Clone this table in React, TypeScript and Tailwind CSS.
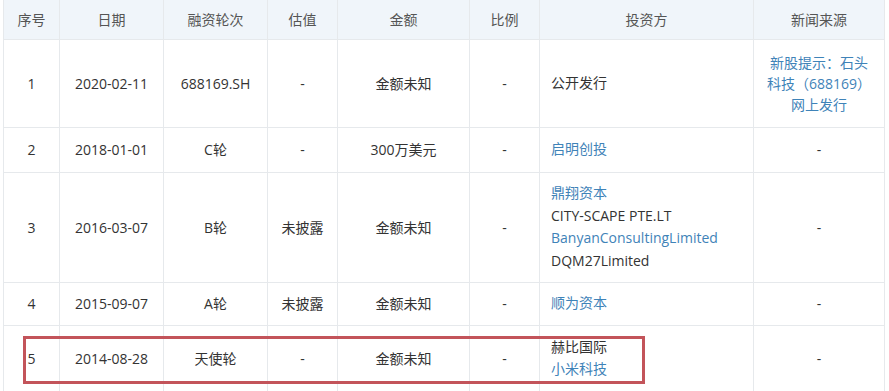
const cols = [56, 104, 104, 70, 132, 70, 214, 131];
const headers = ["序号", "日期", "融资轮次", "估值", "金额", "比例", "投资方", "新闻来源"];

type Investor = { name: string; link?: boolean };

type Row = {
  no: string;
  date: string;
  round: string;
  value: string;
  amount: string;
  ratio: string;
  investors: Investor[];
  news: string[];
  height: string;
};

const rows: Row[] = [
  {
    no: "1",
    date: "2020-02-11",
    round: "688169.SH",
    value: "-",
    amount: "金额未知",
    ratio: "-",
    investors: [{ name: "公开发行" }],
    news: ["新股提示：石头", "科技（688169）", "网上发行"],
    height: "h-[88px]",
  },
  {
    no: "2",
    date: "2018-01-01",
    round: "C轮",
    value: "-",
    amount: "300万美元",
    ratio: "-",
    investors: [{ name: "启明创投", link: true }],
    news: [],
    height: "h-[45px]",
  },
  {
    no: "3",
    date: "2016-03-07",
    round: "B轮",
    value: "未披露",
    amount: "金额未知",
    ratio: "-",
    investors: [
      { name: "鼎翔资本", link: true },
      { name: "CITY-SCAPE PTE.LT" },
      { name: "BanyanConsultingLimited", link: true },
      { name: "DQM27Limited" },
    ],
    news: [],
    height: "h-[110px]",
  },
  {
    no: "4",
    date: "2015-09-07",
    round: "A轮",
    value: "未披露",
    amount: "金额未知",
    ratio: "-",
    investors: [{ name: "顺为资本", link: true }],
    news: [],
    height: "h-[43px]",
  },
  {
    no: "5",
    date: "2014-08-28",
    round: "天使轮",
    value: "-",
    amount: "金额未知",
    ratio: "-",
    investors: [{ name: "赫比国际" }, { name: "小米科技", link: true }],
    news: [],
    height: "h-[66px]",
  },
];

const cell = "border border-[#e6e9ec] text-center align-middle";

export default function App() {
  return (
    <div
      className="relative w-[889px] h-[391px] overflow-hidden bg-white text-[14px] text-[#333]"
      style={{ fontFamily: '"Open Sans", "Noto Sans CJK SC", sans-serif' }}
    >
      <table className="ml-[3px] border-collapse table-fixed w-[881px]">
        <colgroup>
          {cols.map((w, i) => (
            <col key={i} style={{ width: w }} />
          ))}
        </colgroup>
        <thead>
          <tr className="h-[39px] bg-[#f0f5fa]">
            {headers.map((h) => (
              <th key={h} className={`${cell} font-normal text-[#555] border-t-0`}>
                {h}
              </th>
            ))}
          </tr>
        </thead>
        <tbody>
          {rows.map((r) => (
            <tr key={r.no} className={r.height}>
              <td className={cell}>{r.no}</td>
              <td className={cell}>{r.date}</td>
              <td className={cell}>{r.round}</td>
              <td className={cell}>{r.value}</td>
              <td className={cell}>{r.amount}</td>
              <td className={cell}>{r.ratio}</td>
              <td className="border border-[#e6e9ec] text-left align-middle px-[11px] leading-[22.5px]">
                {r.investors.map((inv) => (
                  <div key={inv.name} className={inv.link ? "text-[#3f83b8]" : ""}>
                    {inv.name}
                  </div>
                ))}
              </td>
              <td className={`${cell} leading-[21px]`}>
                {r.news.length > 0 ? (
                  <div className="text-[#3f83b8] px-2">
                    {r.news.map((n) => (
                      <div key={n}>{n}</div>
                    ))}
                  </div>
                ) : (
                  "-"
                )}
              </td>
            </tr>
          ))}
        </tbody>
      </table>
      <div className="absolute left-[23px] top-[336px] w-[622px] h-[48px] border-[3px] border-[#c3545a]" />
    </div>
  );
}
